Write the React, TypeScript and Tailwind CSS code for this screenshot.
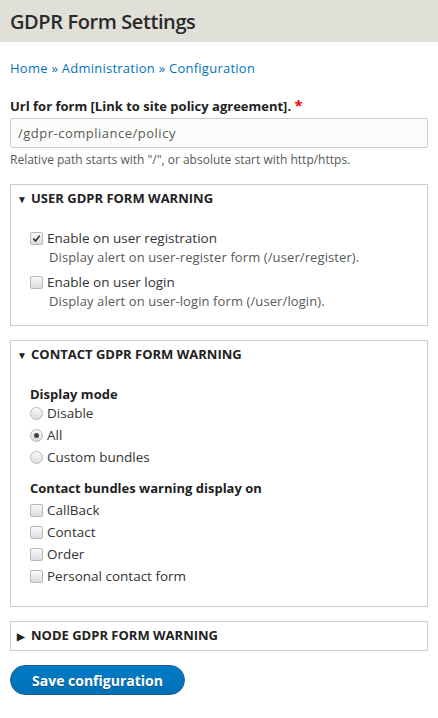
import React, { useState } from "react";

// GDPR form settings page (Drupal Seven admin look)

const FONT = { fontFamily: '"Open Sans", "Noto Sans", Arial, sans-serif' };

function Checkbox({ checked, label, description, onToggle }: { checked: boolean; label: string; description?: string; onToggle: () => void }) {
  return (
    <div className={description ? "mb-[7px]" : "mb-[4px]"}>
      <label className="flex items-center gap-[4px] cursor-pointer text-[13.5px] leading-[18px] text-[#333]" onClick={onToggle}>
        <span className="w-[13px] h-[13px] rounded-[2px] border border-[#b8b8b8] bg-gradient-to-b from-[#fafafa] to-[#dcdcdc] flex items-center justify-center shrink-0">
          {checked && (
            <svg width="9" height="9" viewBox="0 0 10 10">
              <path d="M1.5 5.2 L4 7.8 L8.6 1.8" stroke="#333" strokeWidth="1.8" fill="none" />
            </svg>
          )}
        </span>
        {label}
      </label>
      {description && (
        <div className="pl-[19px] mt-[1px] text-[13px] leading-[18px] tracking-[0.1px] text-[#595959]">{description}</div>
      )}
    </div>
  );
}

function Radio({ checked, label, onSelect }: { checked: boolean; label: string; onSelect: () => void }) {
  return (
    <label className="flex items-center gap-[4px] cursor-pointer text-[13.5px] leading-[18px] text-[#333] mb-[4px]" onClick={onSelect}>
      <span className="w-[13px] h-[13px] rounded-full border border-[#b8b8b8] bg-gradient-to-b from-[#fafafa] to-[#dcdcdc] flex items-center justify-center shrink-0">
        {checked && <span className="w-[5px] h-[5px] rounded-full bg-[#444]" />}
      </span>
      {label}
    </label>
  );
}

function Fieldset({ title, open, onToggle, pt, pb, children }: { title: string; open: boolean; onToggle: () => void; pt?: string; pb?: string; children?: React.ReactNode }) {
  return (
    <div className="border border-[#ccc] mb-[14px]">
      <button onClick={onToggle} className="flex items-center gap-[5px] px-[6px] h-[28px] w-full text-left text-[13px] font-bold uppercase text-[#222]">
        <span className="text-[10px] w-[9px]">{open ? "▼" : "▶"}</span>
        {title}
      </button>
      {open && <div className={`px-[19px] ${pt} ${pb}`}>{children}</div>}
    </div>
  );
}

export default function App() {
  const [url, setUrl] = useState("/gdpr-compliance/policy");
  const [userOpen, setUserOpen] = useState(true);
  const [contactOpen, setContactOpen] = useState(true);
  const [nodeOpen, setNodeOpen] = useState(false);
  const [reg, setReg] = useState(true);
  const [login, setLogin] = useState(false);
  const [mode, setMode] = useState("all");
  const [bundles, setBundles] = useState<Record<string, boolean>>({});

  const bundleList = ["CallBack", "Contact", "Order", "Personal contact form"];

  return (
    <div className="min-h-screen bg-white text-[#333]" style={FONT}>
      {/* header */}
      <div className="bg-[#e0e0d8] h-[42px] px-[10px] flex items-center">
        <h1 className="text-[20px] font-semibold tracking-[-0.4px] text-[#2a2a2a] pt-[1px]">GDPR Form Settings</h1>
      </div>

      <div className="px-[10px] pt-[17px]">
        {/* breadcrumb */}
        <div className="text-[13px] leading-[18px] tracking-[0.25px] text-[#0074bd] mb-[19px]">
          <a href="#">Home</a> » <a href="#">Administration</a> » <a href="#">Configuration</a>
        </div>

        {/* url field */}
        <div className="mb-[15px]">
          <label className="block text-[13px] leading-[18px] font-bold text-[#222] mb-[3px]">
            Url for form [Link to site policy agreement]. <span className="text-[#e00] text-[15px]">*</span>
          </label>
          <input
            value={url}
            onChange={(e) => setUrl(e.target.value)}
            className="w-full h-[30px] border border-[#ccc] rounded-[2px] bg-[#fcfcfa] px-[7px] text-[13px] tracking-[0.5px] text-[#595959] outline-none"
          />
          <div className="text-[12px] leading-[18px] text-[#595959] mt-[3px]">Relative path starts with "/", or absolute start with http/https.</div>
        </div>

        <Fieldset title="User GDPR form warning" open={userOpen} onToggle={() => setUserOpen((s) => !s)} pt="pt-[16px]" pb="pb-[8px]">
          <Checkbox checked={reg} onToggle={() => setReg((s) => !s)} label="Enable on user registration" description="Display alert on user-register form (/user/register)." />
          <Checkbox checked={login} onToggle={() => setLogin((s) => !s)} label="Enable on user login" description="Display alert on user-login form (/user/login)." />
        </Fieldset>

        <Fieldset title="Contact GDPR form warning" open={contactOpen} onToggle={() => setContactOpen((s) => !s)} pt="pt-[16px]" pb="pb-[17px]">
          <div className="text-[13px] leading-[18px] font-bold text-[#222] mb-[1px]">Display mode</div>
          <Radio checked={mode === "disable"} onSelect={() => setMode("disable")} label="Disable" />
          <Radio checked={mode === "all"} onSelect={() => setMode("all")} label="All" />
          <Radio checked={mode === "custom"} onSelect={() => setMode("custom")} label="Custom bundles" />
          <div className="text-[13px] leading-[18px] font-bold text-[#222] mt-[13px] mb-[4px]">Contact bundles warning display on</div>
          {bundleList.map((b) => (
            <Checkbox key={b} checked={!!bundles[b]} onToggle={() => setBundles((s) => ({ ...s, [b]: !s[b] }))} label={b} />
          ))}
        </Fieldset>

        <Fieldset title="Node GDPR form warning" open={nodeOpen} onToggle={() => setNodeOpen((s) => !s)} />

        <button className="h-[30px] px-[21px] rounded-full bg-gradient-to-b from-[#007bc6] to-[#0071b8] border border-[#1e5c90] text-white font-bold text-[14px] [text-shadow:0_1px_#1a5186]">
          Save configuration
        </button>
      </div>
    </div>
  );
}
